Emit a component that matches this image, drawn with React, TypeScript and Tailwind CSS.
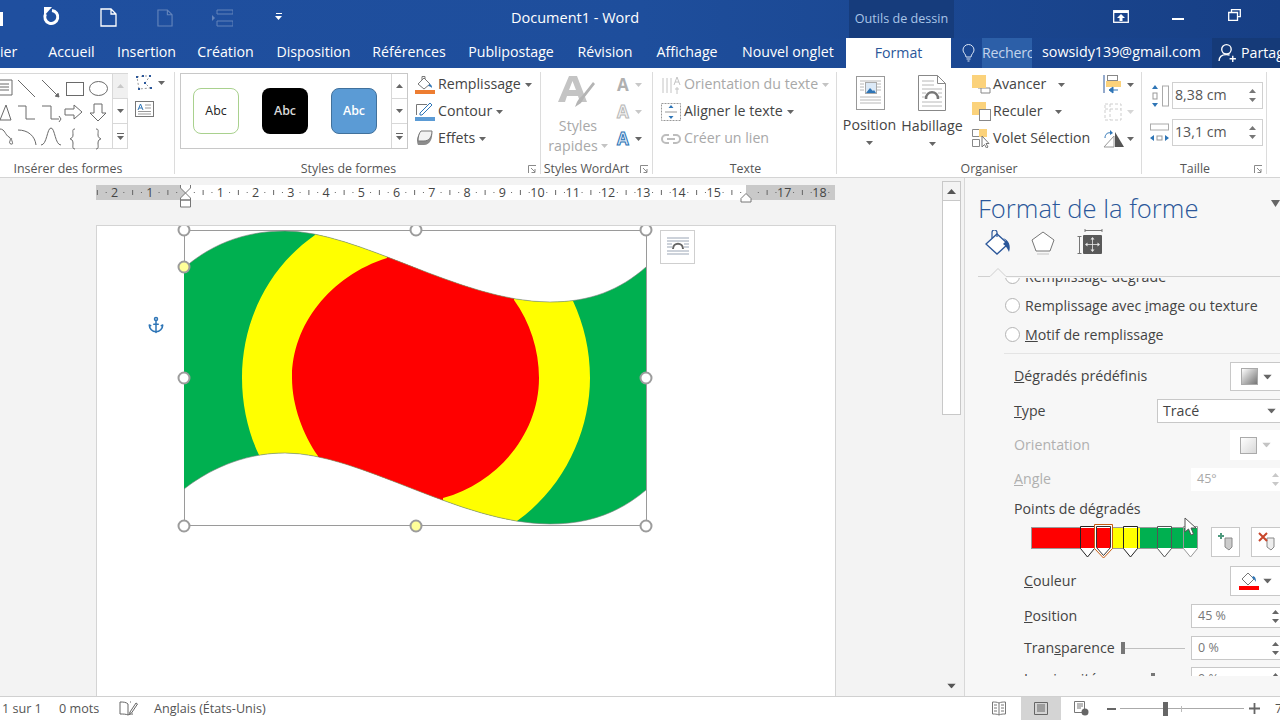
import React from 'react';
import { Anchor } from 'lucide-react';

const Caret = ({ color = '#666', className = '' }: { color?: string; className?: string }) => (
  <svg width="7" height="4" viewBox="0 0 7 4" className={`shrink-0 ${className}`}>
    <path d="M0 0h7L3.5 4z" fill={color} />
  </svg>
);

const Spin = ({ color = '#666' }: { color?: string }) => (
  <svg width="9" height="17" viewBox="0 0 9 17" className="shrink-0">
    <path d="M4.500 2L8 6H1zM1 11h7l-3.500 4z" fill={color} />
  </svg>
);

const Launcher = () => (
  <svg width="9" height="9" viewBox="0 0 9 9" className="absolute right-[3px] top-[7px]">
    <path d="M.5 8V.5H8M3 3l4 4M7 4v3.500H3.500" fill="none" stroke="#8a8a8a" />
  </svg>
);

const ScrollCol = ({ disabledTop }: { disabledTop?: boolean }) => (
  <div className="w-[16px] border-l border-[#d8d8d8] flex flex-col shrink-0">
    <div className={`flex-1 flex items-center justify-center border-b border-[#d8d8d8] ${disabledTop ? 'bg-[#f0f0f0]' : ''}`}>
      <svg width="7" height="4" viewBox="0 0 7 4"><path d="M3.500 0L7 4H0z" fill={disabledTop ? '#c8c8c8' : '#666'} /></svg>
    </div>
    <div className="flex-1 flex items-center justify-center border-b border-[#d8d8d8]"><Caret /></div>
    <div className="flex-1 flex flex-col items-center justify-center gap-[2px]">
      <div className="w-[7px] h-px bg-[#666]" />
      <Caret />
    </div>
  </div>
);

const ShapesGallery = () => (
  <svg width="112" height="76" viewBox="0 0 112 76" fill="none" stroke="#6a6a6a" className="shrink-0">
    <path d="M-4 6h16v15H-4zM0 10h9M0 13h9M0 16h9" />
    <path d="M18 6l17 17M42 6l17 17" />
    <path d="M55 22l4 1-1-4" fill="#6a6a6a" />
    <rect x="66.500" y="8.500" width="17" height="13" />
    <ellipse cx="98.500" cy="14.500" rx="9" ry="7" />
    <path d="M6 31L11 46H0z" />
    <path d="M18 32h8v13h9M42 32h9v13h8" />
    <path d="M59 42l2 3-2 3" />
    <path d="M65 35h9v-4l8 7-8 7v-4h-9z" />
    <path d="M94 30h8v9h4l-8 8-8-8h4z" />
    <path d="M0 55c5 0 5 6 9 8s-2 6 2 7-1-5 1-6" />
    <path d="M18 56c10 0 17 6 18 15M41 71c6 0 6-17 10-17s4 17 10 17" />
    <path d="M75 55c-3 0-2 2-2 6 0 3-2 3-3 4 1 0 3 1 3 4s-1 6 2 6M96 55c3 0 2 2 2 6 0 3 2 3 3 4-1 0-3 1-3 4s1 6-2 6" />
  </svg>
);

const Abc = ({ className }: { className: string }) => (
  <div className={`w-[46px] h-[46px] rounded-[8px] flex items-center justify-center text-[12.400px] ${className}`}>Abc</div>
);

const FillIcon = () => (
  <svg width="20" height="20" viewBox="0 0 20 20" className="shrink-0">
    <path d="M3 9l6-6 6 6-6 5z" fill="#fff" stroke="#777" />
    <path d="M7 5V1.500h3V4" fill="none" stroke="#777" />
    <path d="M15 9c2 1 2 3 2 4-1-1-2-2-4-2z" fill="#2e75b6" />
    <rect x="0" y="15" width="20" height="4" fill="#ed7d31" />
  </svg>
);
const LineIcon = () => (
  <svg width="20" height="20" viewBox="0 0 20 20" className="shrink-0">
    <path d="M1.500 13V2.500H12" fill="none" stroke="#777" />
    <path d="M5 11L15 1l2 2L7 13H5z" fill="#fff" stroke="#2e75b6" />
    <rect x="0" y="15" width="20" height="4" fill="#5b9bd5" />
  </svg>
);
const EffectIcon = () => (
  <svg width="20" height="20" viewBox="0 0 20 20" className="shrink-0">
    <path d="M6 3h11c1 6-2 13-8 13H3C1 12 2 6 6 3z" fill="#8c8c8c" />
    <path d="M6 2h11c0 6-3 10-8 10H3C3 8 4 4 6 2z" fill="#f2f2f2" stroke="#777" />
  </svg>
);

const RibbonRow = ({ icon, label, disabled, caretGap = 4 }: { icon: React.ReactNode; label: string; disabled?: boolean; caretGap?: number }) => (
  <div className="h-[27px] flex items-center whitespace-nowrap">
    {icon}
    <span className={`ml-[3px] mb-[2px] ${disabled ? 'text-[#a8a8a8]' : 'text-[#444]'}`}>{label}</span>
    {caretGap > 0 && <span style={{ width: caretGap }} />}
    {caretGap > 0 && <Caret color={disabled ? '#c4c4c4' : '#666'} />}
  </div>
);

const Sep = () => <div className="w-px h-[102px] mt-[4px] bg-[#dcdcdc] shrink-0" />;

const GroupLabel = ({ children, launcher, className = '' }: { children: string; launcher?: boolean; className?: string }) => (
  <div className={`relative h-[19px] pt-[3px] flex items-center justify-center text-[12.400px] text-[#555] whitespace-nowrap ${className}`}>
    {children}
    {launcher && <Launcher />}
  </div>
);

const SizeField = ({ icon, value }: { icon: React.ReactNode; value: string }) => (
  <div className="flex items-center">
    {icon}
    <div className="ml-[3px] w-[91px] h-[27px] border border-[#d0d0d0] flex items-center justify-between pl-[2px] pr-[5px] text-[#555]">
      <span className="mb-[2px]">{value}</span>
      <Spin color="#777" />
    </div>
  </div>
);

const tabs = [
  { label: 'Accueil', w: 'w-[71px]' },
  { label: 'Insertion', w: 'w-[79px]' },
  { label: 'Création', w: 'w-[79px]' },
  { label: 'Disposition', w: 'w-[97px]' },
  { label: 'Références', w: 'w-[94px]' },
  { label: 'Publipostage', w: 'w-[110px]' },
  { label: 'Révision', w: 'w-[78px]' },
  { label: 'Affichage', w: 'w-[86px]' },
  { label: 'Nouvel onglet', w: 'w-[116px]' },
];

const Ruler = () => {
  const x0 = 89;
  const step = 35.25;
  const nums: { n: number; x: number }[] = [];
  for (let i = -2; i <= 18; i++) if (i !== 0 && i !== 16) nums.push({ n: Math.abs(i), x: x0 + i * step });
  const marks: React.ReactNode[] = [];
  for (let i = -3; i <= 18; i++) {
    const x = x0 + i * step;
    marks.push(<rect key={`a${i}`} x={x + step / 4} y={7} width={1} height={1} fill="#666" />);
    marks.push(<rect key={`b${i}`} x={x + step / 2} y={5} width={1} height={5} fill="#666" />);
    marks.push(<rect key={`c${i}`} x={x + (step * 3) / 4} y={7} width={1} height={1} fill="#666" />);
  }
  return (
    <svg width="739" height="30" viewBox="0 0 739 30" className="block">
      <rect x="0" y="0" width="739" height="15" fill="#c9c9c9" />
      <rect x="89" y="0" width="561" height="15" fill="#fff" />
      {marks}
      {nums.map((m) => (
        <g key={m.x}>
          <rect x={m.x - 6} y={1} width={12} height={13} fill={m.x < 89 || m.x > 650 ? '#c9c9c9' : '#fff'} />
          <text x={m.x} y={12} textAnchor="middle" fontSize="12.500" fill="#444" fontFamily="Open Sans, sans-serif">{m.n}</text>
        </g>
      ))}
      <path d="M84.500 -2h10v5l-5 5-5-5zM89.500 8l5 5v2h-10v-2zM84.500 15h10v7h-10z" fill="#fff" stroke="#777" />
      <path d="M650 8.500l5 5v3.500h-10v-3.500z" fill="#fff" stroke="#777" />
    </svg>
  );
};

// selection box drawn in page coordinates: page origin is (97, 225)
const WaveShape = () => (
  <svg width="739" height="340" viewBox="97 225 739 340" className="absolute left-0 -top-px">
    <defs>
      <clipPath id="wave">
        <path d="M184 268C215 241 250 231 285 231C360 231 460 302 550 302C590 302 620 290 646 267L646 490C620 512 590 524 550 524C460 524 360 453 285 453C250 453 215 465 184 489Z" />
      </clipPath>
    </defs>
    <rect x="184.500" y="230.500" width="462" height="295" fill="none" stroke="#9a9a9a" />
    <g clipPath="url(#wave)">
      <rect x="184" y="225" width="463" height="305" fill="#00b050" />
      <path d="M315 235C265 270 242 325 242 378C242 405 248 432 259 455L259 540L517 540L517 521C565 487 590 430 590 378C590 350 584 325 573 301L573 220L315 220Z" fill="#ffff00" />
      <path d="M387 258C330 276 292 325 292 378C292 405 303 435 318 456L318 540L443 540L443 498C500 482 539 432 539 378C539 350 530 322 514 300L514 220L387 220Z" fill="#ff0000" />
    </g>
    <path d="M184 268C215 241 250 231 285 231C360 231 460 302 550 302C590 302 620 290 646 267M646 490C620 512 590 524 550 524C460 524 360 453 285 453C250 453 215 465 184 489" fill="none" stroke="#7f7f7f" strokeWidth="0.600" />
    {[[184, 230], [416, 230], [646, 230], [184, 378], [646, 378], [184, 526], [646, 526]].map(([x, y]) => (
      <circle key={`${x}-${y}`} cx={x} cy={y} r="5.500" fill="#fff" stroke="#9c9c9c" strokeWidth="2" />
    ))}
    {[[184, 267], [416, 526]].map(([x, y]) => (
      <circle key={`${x}-${y}`} cx={x} cy={y} r="5.500" fill="#ffff99" stroke="#9c9c9c" strokeWidth="2" />
    ))}
  </svg>
);

const GradientStops = () => (
  <svg width="175" height="32" viewBox="1031 527 175 32" className="shrink-0 overflow-visible">
    <rect x="1031.500" y="527.500" width="165" height="21" fill="#fff" stroke="#9a9a9a" />
    <rect x="1032" y="528" width="80" height="20" fill="#ff0000" />
    <rect x="1112" y="528" width="30" height="20" fill="#ffff00" />
    <rect x="1140" y="528" width="57" height="20" fill="#00b050" />
    {[
      [1080, '#ff0000', '#222'],
      [1123, '#ffff00', '#222'],
      [1157, '#00b050', '#555'],
      [1183, '#00b050', '#999'],
    ].map(([x, c, s]) => (
      <g key={x as number}>
        <path d={`M${x as number + 0.5} 526.500h14v22l-7 8.500-7-8.500z`} fill="#fff" stroke={s as string} />
        <rect x={x as number + 1} y={528} width={13} height={20} fill={c as string} />
      </g>
    ))}
    <path d="M1094.500 524.500h18v24l-9 9.500-9-9.500z" fill="#fff" stroke="#c55a11" />
    <path d="M1096.500 526.500h14v21l-7 8-7-8z" fill="#fff" stroke="#333" />
    <rect x="1097" y="528" width="13" height="20" fill="#ff0000" />
  </svg>
);

const PaneInput = ({ value, color = '#666', borderless }: { value: string; color?: string; borderless?: boolean }) => (
  <div className={`w-[89px] h-full flex items-center justify-between pl-[6px] text-[12.500px] ${borderless ? 'bg-white text-[#a8a8a8]' : 'bg-white border border-r-0 border-[#c8c8c8] text-[#777]'}`}>
    {value}
    <Spin color={color} />
  </div>
);

const Swatch = ({ disabled }: { disabled?: boolean }) => (
  <div className={`w-[50px] h-full flex items-center gap-[6px] pl-[10px] ${disabled ? 'bg-white' : 'bg-white border border-r-0 border-[#c8c8c8]'}`}>
    <div className={`w-[17px] h-[17px] border border-[#aaa] ${disabled ? 'bg-linear-to-br from-white to-[#d8d8d8]' : 'bg-linear-to-br from-white to-[#777]'}`} />
    <Caret color={disabled ? '#c4c4c4' : '#666'} className="scale-125" />
  </div>
);

const Radio = ({ children }: { children: React.ReactNode }) => (
  <div className="h-[29px] flex items-center pl-[40px] gap-[5px] whitespace-nowrap">
    <div className="w-[15px] h-[15px] rounded-full border border-[#b4b4b4] bg-white shrink-0" />
    <span>{children}</span>
  </div>
);

const Lbl = ({ children }: { children: React.ReactNode }) => <span className="mb-[1px]">{children}</span>;

export default function App() {
  return (
    <div className="relative w-[1280px] h-[720px] overflow-hidden flex flex-col bg-white font-['Open_Sans',sans-serif] text-[14.200px] text-[#444]">
      {/* Title bar */}
      <div className="h-[38px] shrink-0 flex items-center bg-linear-to-r from-[#1f4f9f] via-[#1e4e9c] to-[#173f85] text-white">
        <div className="w-[3px] h-[14px] bg-white shrink-0" />
        <svg width="20" height="20" viewBox="0 0 20 20" className="ml-[38px] -mt-[6px] shrink-0">
          <path d="M11 4.500A6.500 6.500 0 1 1 4.500 8" fill="none" stroke="#fff" strokeWidth="3" />
          <path d="M3 1h8L3 10z" fill="#fff" />
        </svg>
        <svg width="17" height="19" viewBox="0 0 17 19" className="ml-[39px] -mt-[3px] shrink-0">
          <path d="M1 1h10l5 5v12H1zM11 1v5h5" fill="none" stroke="#fff" strokeWidth="1.300" />
        </svg>
        <svg width="16" height="18" viewBox="0 0 17 19" className="ml-[40px] -mt-[3px] shrink-0 opacity-30">
          <path d="M1 1h10l5 5v12H1zM11 1v5h5" fill="none" stroke="#fff" strokeWidth="1.200" />
        </svg>
        <svg width="21" height="18" viewBox="0 0 21 18" className="ml-[39px] -mt-[3px] shrink-0 opacity-30">
          <path d="M5 1h16M5 17h16M5 1v4h16V1M5 17v-5h16v5" fill="none" stroke="#fff" />
          <path d="M0 6l3 3-3 3z" fill="#fff" />
        </svg>
        <div className="ml-[42px] -mt-[5px] flex flex-col items-center gap-[2px] shrink-0">
          <div className="w-[6px] h-px bg-white" />
          <Caret color="#fff" />
        </div>
        <div className="ml-[229px] w-[126px] mb-[3px] text-center text-[14.500px] whitespace-nowrap shrink-0">Document1 - Word</div>
        <div className="ml-[212px] w-[105px] h-full bg-[#163c7c] flex items-center justify-center text-[12.600px] text-[#a9c5e8] whitespace-nowrap shrink-0">Outils de dessin</div>
        <svg width="16" height="13" viewBox="0 0 16 13" className="ml-[159px] -mt-[6px] shrink-0">
          <rect x=".7" y=".7" width="14.600" height="11.600" fill="none" stroke="#fff" strokeWidth="1.300" />
          <rect x="1" y="1" width="14" height="2" fill="#fff" />
          <path d="M8 4l4 4H9.500v3h-3V8H4z" fill="#fff" />
        </svg>
        <div className="ml-[43px] w-[12px] h-[2px] bg-white shrink-0" />
        <svg width="13" height="12" viewBox="0 0 13 12" className="ml-[44px] -mt-[8px] shrink-0">
          <path d="M3.500 3V.7h8.800v7H9.500M.7 3.500h8.800v7.800H.7z" fill="none" stroke="#fff" strokeWidth="1.300" />
        </svg>
      </div>

      {/* Tabs */}
      <div className="h-[30px] shrink-0 flex items-center bg-linear-to-r from-[#1f4f9f] via-[#1e4e9c] to-[#174088] text-white whitespace-nowrap">
        <div className="w-[36px] mb-[2px] shrink-0">ier</div>
        {tabs.map((t) => (
          <div key={t.label} className={`${t.w} mb-[2px] text-center shrink-0`}>{t.label}</div>
        ))}
        <div className="w-[105px] h-full bg-white text-[#2b579a] flex items-center justify-center shrink-0"><Lbl>Format</Lbl></div>
        <svg width="13" height="18" viewBox="0 0 13 18" className="ml-[11px] shrink-0">
          <path d="M4 13c0-3-3-4-3-7a5.500 5.500 0 0 1 11 0c0 3-3 4-3 7zM4.500 15h4M5.500 17h2" fill="none" stroke="#dbe6f5" />
        </svg>
        <div className="ml-[7px] w-[50px] h-full bg-[#2c5fa8] overflow-hidden flex items-center text-[#c3d4ec] tracking-[-0.2px] shrink-0"><Lbl>Recherc</Lbl></div>
        <div className="ml-[10px] mb-[2px] w-[160px] shrink-0 text-[14.300px]">sowsidy139@gmail.com</div>
        <div className="ml-[10px] flex-1 h-full bg-[#153a78] flex items-center pl-[6px] gap-[4px] overflow-hidden">
          <svg width="19" height="20" viewBox="0 0 18 19" className="shrink-0">
            <circle cx="8" cy="6" r="4.500" fill="none" stroke="#fff" strokeWidth="1.300" />
            <path d="M1 17c0-4 3-6 7-6 1 0 2 .2 3 .6M14 12v6M11 15h6" fill="none" stroke="#fff" strokeWidth="1.300" />
          </svg>
          <Lbl>Partag</Lbl>
        </div>
      </div>

      {/* Ribbon */}
      <div className="h-[110px] shrink-0 flex bg-white border-b border-[#d4d4d4]">
        <div className="w-[174px] flex flex-col shrink-0">
          <div className="h-[90px] pt-[5px] flex">
            <div className="w-[128px] h-[76px] border border-l-0 border-[#d8d8d8] flex">
              <ShapesGallery />
              <ScrollCol disabledTop />
            </div>
            <div className="ml-[7px] flex flex-col">
              <div className="flex items-center gap-[3px] mt-[1px]">
                <svg width="20" height="18" viewBox="0 0 20 18">
                  <path d="M2 3l6-1 7 0-5 7 5 5-11 1z" fill="none" stroke="#9a9a9a" strokeDasharray="2 2" />
                  <path d="M1 2h2v2H1zM7 1h2v2H7zM14 1h2v2h-2zM9 8h2v2H9zM15 13h2v2h-2zM3 14h2v2H3z" fill="#2b579a" />
                </svg>
                <Caret />
              </div>
              <svg width="20" height="17" viewBox="0 0 20 17" className="mt-[9px]">
                <rect x=".5" y=".5" width="18" height="15" fill="#fff" stroke="#777" />
                <path d="M3 9l2.500-6L8 9M4 7h3" fill="none" stroke="#2e75b6" />
                <path d="M10 4h6M10 7h6M3 10.500h13M3 13h13" stroke="#999" />
              </svg>
            </div>
          </div>
          <GroupLabel className="pr-[38px]">Insérer des formes</GroupLabel>
        </div>
        <Sep />

        <div className="w-[365px] flex flex-col shrink-0">
          <div className="h-[90px] flex">
            <div className="ml-[5px] mt-[5px] w-[228px] h-[76px] border border-[#c8c8c8] flex shrink-0">
              <div className="flex-1 flex items-center pl-[12px] gap-[23px]">
                <Abc className="bg-white border-[1.500px] border-[#a9d18e] text-[#222]" />
                <Abc className="bg-black text-[#d8d8d8] font-semibold" />
                <Abc className="bg-[#5b9bd5] border border-[#41719c] text-white font-semibold" />
              </div>
              <ScrollCol />
            </div>
            <div className="ml-[7px] pt-[3px] flex flex-col">
              <RibbonRow icon={<FillIcon />} label="Remplissage" />
              <RibbonRow icon={<LineIcon />} label="Contour" />
              <RibbonRow icon={<EffectIcon />} label="Effets" />
            </div>
          </div>
          <GroupLabel launcher className="pr-[18px]">Styles de formes</GroupLabel>
        </div>
        <Sep />

        <div className="w-[111px] flex flex-col shrink-0">
          <div className="h-[90px] flex">
            <div className="w-[74px] pt-[8px] flex flex-col items-center text-[#a8a8a8] leading-[20px] shrink-0">
              <svg width="38" height="36" viewBox="0 0 38 36" className="mr-[4px]">
                <path d="M12 0h8l10 26h-7l-2-6H10l-2 6H1zM12 14h7l-3.500-9z" fill="#c4c4c4" fillRule="evenodd" />
                <path d="M36 6l2 2-11 14-3 5-6 4c2-5 3-8 7-11z" fill="#b4b4b4" />
              </svg>
              <div className="mt-[4px]">Styles</div>
              <div className="flex items-center gap-[3px]">rapides <Caret color="#c4c4c4" /></div>
            </div>
            <div className="pt-[3px] flex flex-col">
              {[
                <span key="a" className="font-bold text-[#b0b0b0] text-[17px]">A</span>,
                <span key="b" className="font-bold text-[#f4f4f4] text-[17px] [-webkit-text-stroke:1px_#b8b8b8]">A</span>,
                <span key="c" className="font-bold text-[#dceaf8] text-[17px] [-webkit-text-stroke:1px_#2e75b6]">A</span>,
              ].map((a, i) => (
                <div key={i} className="h-[27px] flex items-center gap-[6px] pl-[2px]">
                  {a}
                  <Caret color={i === 2 ? '#666' : '#c8c8c8'} />
                </div>
              ))}
            </div>
          </div>
          <GroupLabel launcher className="pr-[20px]">Styles WordArt</GroupLabel>
        </div>
        <Sep />

        <div className="w-[183px] flex flex-col shrink-0">
          <div className="h-[90px] pt-[3px] pl-[8px] flex flex-col">
            <RibbonRow
              disabled
              label="Orientation du texte"
              icon={
                <svg width="20" height="20" viewBox="0 0 20 20" className="shrink-0">
                  <path d="M2 3v15M6 3v15M10 3v15" stroke="#c4c4c4" />
                  <path d="M13 10l3-8 3 8M14 7h4M14 14h4M16 12v7" fill="none" stroke="#c4c4c4" />
                </svg>
              }
            />
            <RibbonRow
              label="Aligner le texte"
              icon={
                <svg width="20" height="18" viewBox="0 0 20 18" className="shrink-0">
                  <rect x=".5" y=".5" width="19" height="17" fill="none" stroke="#999" strokeDasharray="2 1" />
                  <path d="M4 9h12" stroke="#999" />
                  <path d="M10 2l2.500 3h-5zM10 16l2.500-3h-5z" fill="#2e75b6" />
                </svg>
              }
            />
            <RibbonRow
              disabled
              caretGap={0}
              label="Créer un lien"
              icon={
                <svg width="20" height="12" viewBox="0 0 20 12" className="shrink-0">
                  <path d="M8 2H5a4 4 0 0 0 0 8h3M12 2h3a4 4 0 0 1 0 8h-3M6 6h8" fill="none" stroke="#bdbdbd" strokeWidth="2" />
                </svg>
              }
            />
          </div>
          <GroupLabel className="pl-[2px]">Texte</GroupLabel>
        </div>
        <Sep />

        <div className="w-[304px] flex flex-col shrink-0">
          <div className="h-[90px] flex">
            <div className="w-[60px] pl-[5px] pt-[8px] flex flex-col items-center leading-[20px] shrink-0">
              <svg width="30" height="34" viewBox="0 0 30 34" className="ml-[2px]">
                <rect x=".5" y=".5" width="28" height="33" fill="#fff" stroke="#999" />
                <path d="M4 5h21M4 8h4M21 8h4M4 11h4M21 11h4M4 14h4M21 14h4M4 21h21M4 24h21M4 27h21" stroke="#b8b8b8" />
                <rect x="9.500" y="6.500" width="11" height="11" fill="#dce9f6" stroke="#aaa" />
                <path d="M10 17l4-5 3 3 1-1 2 3z" fill="#2e75b6" />
              </svg>
              <div className="mt-[5px] whitespace-nowrap">Position</div>
              <Caret className="mt-[6px]" />
            </div>
            <div className="w-[65px] pl-[5px] pt-[7px] flex flex-col items-center leading-[20px] shrink-0">
              <svg width="28" height="36" viewBox="0 0 28 36">
                <path d="M.5.5h19l8 8v27H.5zM19.500.5v8h8" fill="#fff" stroke="#888" />
                <path d="M4 6h12M4 10h12M4 14h20M4 18h4M20 18h4M4 22h4M20 22h4M4 27h20M4 31h20" stroke="#b8b8b8" />
                <path d="M8 24c0-9 12-9 12 0" fill="none" stroke="#777" strokeWidth="2.500" />
              </svg>
              <div className="mt-[5px] whitespace-nowrap">Habillage</div>
              <Caret className="mt-[6px]" />
            </div>
            <div className="w-[131px] ml-[10px] pt-[3px] flex flex-col shrink-0">
              <div className="h-[27px] flex items-center whitespace-nowrap">
                <svg width="19" height="19" viewBox="0 0 19 19" className="shrink-0">
                  <path d="M6 13h12v5H9v-5" fill="none" stroke="#888" />
                  <rect x="0" y="0" width="14" height="13" fill="#fbd27b" />
                </svg>
                <span className="ml-[2px] mb-[2px]">Avancer</span>
                <Caret className="ml-[12px]" />
              </div>
              <div className="h-[27px] flex items-center whitespace-nowrap">
                <svg width="19" height="19" viewBox="0 0 19 19" className="shrink-0">
                  <rect x="0" y="0" width="14" height="13" fill="#fbd27b" />
                  <rect x="7.500" y="7.500" width="11" height="11" fill="#fff" stroke="#888" />
                </svg>
                <span className="ml-[2px] mb-[2px]">Reculer</span>
                <Caret className="ml-[12px]" />
              </div>
              <div className="h-[27px] flex items-center whitespace-nowrap">
                <svg width="19" height="19" viewBox="0 0 19 19" className="shrink-0">
                  <path d="M.5.5h7v7h-7zM.5 10.500h7v7h-7z" fill="none" stroke="#888" />
                  <rect x="7" y="0" width="8" height="8" fill="#fbd27b" />
                  <path d="M10 7l0 11 2.500-2.500 2 3.500 1.500-1-2-3.500h3z" fill="#fff" stroke="#777" />
                </svg>
                <span className="ml-[2px] mb-[2px]">Volet Sélection</span>
              </div>
            </div>
            <div className="pt-[3px] flex flex-col shrink-0">
              <div className="h-[27px] flex items-center gap-[2px]">
                <svg width="22" height="20" viewBox="0 0 22 20">
                  <path d="M1 0v18" stroke="#2b579a" />
                  <rect x="4.500" y=".5" width="10" height="5" fill="#fff" stroke="#888" />
                  <rect x="3" y="6" width="15" height="6" fill="#fbd27b" />
                  <path d="M15 15H7M10 12l-4 3 4 3z" stroke="#2e75b6" fill="#2e75b6" />
                </svg>
                <Caret />
              </div>
              <div className="h-[27px] flex items-center gap-[2px] opacity-60">
                <svg width="22" height="20" viewBox="0 0 22 20">
                  <path d="M2 2h16v16H2zM7 2v16M2 7h16" fill="none" stroke="#b0b0b0" strokeDasharray="3 2" />
                </svg>
                <Caret color="#bbb" />
              </div>
              <div className="h-[27px] flex items-center gap-[2px]">
                <svg width="22" height="18" viewBox="0 0 22 18">
                  <path d="M1 17L11 6v11z" fill="#fff" stroke="#999" />
                  <path d="M12 2l9 15h-9z" fill="#555" />
                  <path d="M2 8c0-4 3-6 6-5" fill="none" stroke="#2e75b6" />
                  <path d="M7 0l3 3-3 2z" fill="#2e75b6" />
                </svg>
                <Caret />
              </div>
            </div>
          </div>
          <GroupLabel>Organiser</GroupLabel>
        </div>
        <Sep />

        <div className="w-[124px] flex flex-col shrink-0">
          <div className="h-[90px] pt-[14px] pl-[8px] flex flex-col gap-[10px]">
            <SizeField
              value="8,38 cm"
              icon={
                <svg width="19" height="22" viewBox="0 0 19 22" className="shrink-0">
                  <rect x="12.500" y="1" width="6" height="20" fill="#fff" stroke="#aaa" />
                  <path d="M5 0l3 4H2zM5 22l3-4H2z" fill="#2e75b6" />
                  <rect x="3" y="8" width="4" height="6" fill="#fff" stroke="#999" />
                </svg>
              }
            />
            <SizeField
              value="13,1 cm"
              icon={
                <svg width="19" height="22" viewBox="0 0 19 22" className="shrink-0">
                  <rect x=".5" y="2" width="18" height="6" fill="#fff" stroke="#aaa" />
                  <path d="M0 16l4-3v6zM19 16l-4-3v6z" fill="#2e75b6" />
                  <rect x="7" y="14" width="5" height="4" fill="#fff" stroke="#999" />
                </svg>
              }
            />
          </div>
          <GroupLabel launcher className="pr-[18px]">Taille</GroupLabel>
        </div>
        <Sep />
      </div>

      {/* Document + task pane */}
      <div className="flex-1 min-h-0 flex">
        <div className="w-[941px] shrink-0 bg-[#f3f3f3] pl-[96px] pt-[7px] flex flex-col overflow-hidden">
          <div className="h-[40px] shrink-0"><Ruler /></div>
          <div className="relative flex-1 w-[740px] bg-white border border-b-0 border-[#d4d4d4] overflow-hidden">
            <WaveShape />
            <Anchor size={18} strokeWidth={2} className="absolute left-[50px] top-[90px] text-[#2e75b6]" />
            <div className="absolute left-[563px] top-[4px] w-[35px] h-[34px] bg-white border border-[#cfcfcf] flex items-center justify-center">
              <svg width="22" height="20" viewBox="0 0 22 20">
                <path d="M0 1h22M0 4h22M0 7h5M17 7h5M0 10h5M17 10h5M0 14h22M0 17h22" stroke="#9aa5b5" />
                <path d="M6 12c0-7 10-7 10 0" fill="none" stroke="#666" strokeWidth="2" />
              </svg>
            </div>
          </div>
        </div>

        <div className="w-[24px] shrink-0 bg-[#f3f3f3] border-r border-[#d8d8d8] flex flex-col items-center pr-[2px]">
          <div className="mt-[3px] w-[19px] h-[19px] border border-b-0 border-[#c8c8c8] flex items-center justify-center">
            <svg width="9" height="5" viewBox="0 0 9 5"><path d="M4.500 0L9 5H0z" fill="#555" /></svg>
          </div>
          <div className="w-[19px] h-[215px] bg-white border border-[#c8c8c8]" />
          <div className="flex-1" />
          <Caret color="#555" className="mb-[8px] scale-125" />
        </div>

        <div className="flex-1 min-w-0 bg-[#f7f7f7] flex flex-col overflow-hidden">
          <div className="relative h-[100px] shrink-0">
            <div className="pl-[13px] pt-[14px] text-[25.600px] font-light leading-[34px] text-[#2b579a] whitespace-nowrap">Format de la forme</div>
            <svg width="9" height="7" viewBox="0 0 9 7" className="absolute right-0 top-[22px]"><path d="M0 0h9L4.500 7z" fill="#666" /></svg>
            <div className="flex items-center pl-[19px] mt-[3px]">
              <svg width="28" height="26" viewBox="0 0 28 26" className="shrink-0">
                <path d="M2 14L13 4l11 10-11 10z" fill="#fff" stroke="#2b579a" strokeWidth="1.300" />
                <path d="M8 8V2.500a2.500 2.500 0 0 1 5 0V7" fill="none" stroke="#2b579a" strokeWidth="1.200" />
                <path d="M19 8c6 2 8 8 6 14-2-4-3-6-6-8l3-3z" fill="#2b579a" />
              </svg>
              <svg width="26" height="26" viewBox="0 0 26 26" className="ml-[18px] shrink-0">
                <path d="M13 2l11 8-4 11H6L2 10z" fill="#fff" stroke="#777" />
                <path d="M7 24h12" stroke="#ddd" strokeWidth="2" />
              </svg>
              <svg width="26" height="27" viewBox="0 0 26 27" className="ml-[21px] shrink-0">
                <path d="M8 1.500h17M8 0v3M25 0v3M.5 7.500h4M2.500 7.500v17M.5 24.500h4" fill="none" stroke="#777" />
                <rect x="6" y="6" width="19" height="19" rx="1" fill="#595959" />
                <path d="M15.500 9v13M9 15.500h13" stroke="#e8e8e8" strokeWidth="0.800" />
                <path d="M15.500 8l-2 2.500h4zM15.500 23l-2-2.500h4zM8 15.500l2.500-2v4zM23 15.500l-2.500-2v4z" fill="#e8e8e8" />
              </svg>
            </div>
            <svg width="315" height="12" viewBox="0 0 315 12" className="absolute left-0 bottom-0">
              <path d="M13 10.500h12l8-8 8 8h274" fill="none" stroke="#d0d0d0" />
            </svg>
          </div>

          <div className="h-[398px] shrink-0 overflow-hidden whitespace-nowrap">
            <div className="-mt-[16px]">
              <Radio>Remplissage dégradé</Radio>
              <Radio>Remplissage avec <u>i</u>mage ou texture</Radio>
              <Radio><u>M</u>otif de remplissage</Radio>
            </div>
            <div className="ml-[39px] mt-[4px] h-px bg-[#e4e4e4]" />

            <div className="mt-[8px] h-[29px] flex items-center justify-between pl-[49px]">
              <Lbl><u>D</u>égradés prédéfinis</Lbl>
              <Swatch />
            </div>
            <div className="mt-[8px] h-[24px] flex items-center justify-between pl-[49px]">
              <Lbl><u>T</u>ype</Lbl>
              <div className="w-[123px] h-full bg-white border border-r-0 border-[#c8c8c8] flex items-center justify-between pl-[5px] pr-[5px]">
                Tracé
                <Caret className="scale-125" />
              </div>
            </div>
            <div className="mt-[7px] h-[30px] flex items-center justify-between pl-[49px] text-[#b0b0b0]">
              <Lbl>Orientation</Lbl>
              <Swatch disabled />
            </div>
            <div className="mt-[8px] h-[23px] flex items-center justify-between pl-[49px] text-[#b0b0b0]">
              <Lbl><u>A</u>ngle</Lbl>
              <PaneInput value="45°" color="#c8c8c8" borderless />
            </div>
            <div className="mt-[9px] h-[18px] flex items-center pl-[49px]"><Lbl>Points de dégradés</Lbl></div>
            <div className="mt-[9px] h-[32px] flex pl-[66px]">
              <GradientStops />
              <div className="ml-[5px] w-[29px] h-[30px] border border-[#c8c8c8] bg-white flex items-center justify-center shrink-0">
                <svg width="16" height="18" viewBox="0 0 16 18">
                  <path d="M7 5h7v9l-3 3-4-3z" fill="#ccc" stroke="#888" />
                  <path d="M0 3h6M3 0v6" stroke="#4e9a7e" strokeWidth="2" />
                </svg>
              </div>
              <div className="ml-[11px] w-[30px] h-[30px] border border-r-0 border-[#c8c8c8] bg-white flex items-center justify-center shrink-0">
                <svg width="18" height="20" viewBox="0 0 18 20">
                  <path d="M9 6h7v9l-3 3-4-3z" fill="#eee" stroke="#888" />
                  <path d="M1 1l8 8M9 1L1 9" stroke="#c8452a" strokeWidth="2" />
                </svg>
              </div>
            </div>
            <div className="mt-[7px] h-[30px] flex items-center justify-between pl-[59px]">
              <Lbl><u>C</u>ouleur</Lbl>
              <div className="w-[50px] h-full bg-white border border-r-0 border-[#c8c8c8] flex items-center gap-[5px] pl-[8px]">
                <svg width="20" height="20" viewBox="0 0 20 20" className="shrink-0">
                  <path d="M3 8l6-6 6 6-6 6z" fill="#fff" stroke="#777" />
                  <path d="M14 5c3 1 3 4 3 6-1-2-2-3-4-4z" fill="#2e75b6" />
                  <rect x="0" y="15" width="20" height="4" fill="#ff0000" />
                </svg>
                <Caret className="scale-125" />
              </div>
            </div>
            <div className="mt-[8px] h-[24px] flex items-center justify-between pl-[59px]">
              <Lbl><u>P</u>osition</Lbl>
              <PaneInput value="45 %" />
            </div>
            <div className="mt-[8px] h-[24px] flex items-center pl-[59px]">
              <div className="w-[97px] shrink-0"><Lbl>Tran<u>s</u>parence</Lbl></div>
              <div className="relative w-[64px] h-[12px] flex items-center shrink-0">
                <div className="w-full h-px bg-[#c0c0c0]" />
                <div className="absolute left-0 top-0 w-[4px] h-[12px] bg-[#777]" />
              </div>
              <div className="ml-auto h-full"><PaneInput value="0 %" /></div>
            </div>
            <div className="mt-[7px] h-[24px] flex items-center pl-[59px]">
              <div className="w-[97px] shrink-0"><Lbl>Luminosité</Lbl></div>
              <div className="relative w-[64px] h-[12px] flex items-center shrink-0">
                <div className="w-full h-px bg-[#c0c0c0]" />
                <div className="absolute left-[30px] top-0 w-[4px] h-[12px] bg-[#777]" />
              </div>
              <div className="ml-auto h-full"><PaneInput value="0 %" /></div>
            </div>
          </div>
          <div className="flex-1" />
        </div>
      </div>

      {/* Cursor */}
      <svg width="14" height="20" viewBox="0 0 14 20" className="absolute left-[1184px] top-[517px]">
        <path d="M1 1v14l3.500-3 2.500 6 2.500-1-2.500-6H12z" fill="#fff" stroke="#555" />
      </svg>

      {/* Status bar */}
      <div className="h-[24px] shrink-0 flex items-center bg-white border-t border-[#d0d0d0] text-[12.600px] text-[#555] whitespace-nowrap">
        <span className="ml-[2px] mt-[2px] w-[57px] shrink-0">1 sur 1</span>
        <span className="w-[60px] mt-[2px] shrink-0">0 mots</span>
        <svg width="19" height="15" viewBox="0 0 19 15" className="shrink-0">
          <path d="M9 3C7 1 4 1 1 1v12c3 0 6 0 8 1 1-.6 3-1 5-1M9 3v11M12 1h-1" fill="none" stroke="#666" />
          <path d="M11 11l6-9 1.500 1-6 9-2 .5z" fill="#fff" stroke="#666" />
        </svg>
        <span className="ml-[16px] mt-[2px] w-[838px] shrink-0">Anglais (États-Unis)</span>
        <svg width="14" height="15" viewBox="0 0 14 15" className="shrink-0">
          <path d="M7 2C5 1 3 1 .5 1v12c2.500 0 4.500 0 6.500 1 2-1 4-1 6.500-1V1C11 1 9 1 7 2zM7 2v12M2 4h3M2 7h3M2 10h3M9 4h3M9 7h3M9 10h3" fill="none" stroke="#777" />
        </svg>
        <div className="ml-[15px] w-[40px] h-full bg-[#d4d4d4] flex items-center justify-center shrink-0">
          <svg width="14" height="13" viewBox="0 0 14 13"><path d="M.5.5h13v12H.5zM3 3h8M3 5h8M3 7h8M3 9h8" fill="none" stroke="#666" /></svg>
        </div>
        <svg width="15" height="15" viewBox="0 0 15 15" className="ml-[13px] shrink-0">
          <path d="M.5.5h10v11H.5zM3 3h6M3 5h6M3 7h4" fill="none" stroke="#777" />
          <circle cx="11" cy="11" r="3.500" fill="#666" />
        </svg>
        <div className="ml-[18px] w-[9px] h-[2px] bg-[#666] shrink-0" />
        <div className="relative ml-[4px] w-[124px] h-[12px] flex items-center shrink-0">
          <div className="w-full h-px bg-[#aaa]" />
          <div className="absolute left-[43px] -top-px w-[5px] h-[14px] bg-[#666]" />
          <div className="absolute left-[61px] top-[3px] w-px h-[6px] bg-[#bbb]" />
        </div>
        <svg width="11" height="11" viewBox="0 0 11 11" className="ml-[5px] shrink-0"><path d="M5.500 0v11M0 5.500h11" stroke="#666" strokeWidth="1.800" /></svg>
        <span className="ml-[15px] mt-[2px]">7</span>
      </div>
    </div>
  );
}
